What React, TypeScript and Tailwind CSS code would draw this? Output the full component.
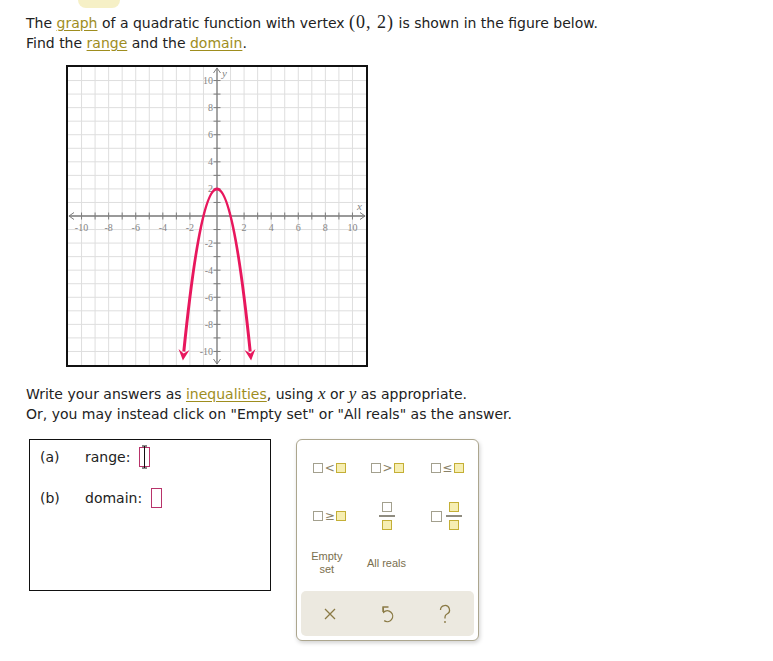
import React from "react";

const U = 298 / 22;
const O = 149;
const X = (x: number) => O + U * x;
const Y = (y: number) => O - U * y;

function Arrow({ side }: { side: 1 | -1 }) {
  const a = 2.45 * side;
  const ex = X(a);
  const ey = Y(2 - 2 * a * a);
  const vx = 1 * U * side;
  const vy = 4 * Math.abs(a) * U;
  const n = Math.hypot(vx, vy);
  const dx = vx / n;
  const dy = vy / n;
  const px = -dy;
  const py = dx;
  const tx = ex + dx * 9;
  const ty = ey + dy * 9;
  const bx = tx - dx * 11;
  const by = ty - dy * 11;
  const nx = tx - dx * 7;
  const ny = ty - dy * 7;
  const pts = [
    [tx, ty],
    [bx + px * 5.5, by + py * 5.5],
    [nx, ny],
    [bx - px * 5.5, by - py * 5.5],
  ]
    .map((p) => p.map((v) => v.toFixed(2)).join(","))
    .join(" ");
  return <polygon points={pts} fill="#e8175d" />;
}

function Graph() {
  const ints: number[] = [];
  for (let i = -10; i <= 10; i++) ints.push(i);
  const a = 2.45;
  const ey = Y(2 - 2 * a * a);
  const cy = Y(2 + 2 * a * a);
  const path = `M ${X(-a)} ${ey} Q ${X(0)} ${cy} ${X(a)} ${ey}`;
  return (
    <div className="ml-[40px] mt-[12px] h-[302px] w-[302px] border-2 border-[#111]">
      <svg width="298" height="298" viewBox="0 0 298 298" className="block">
        {ints.map((i) => (
          <g key={"g" + i}>
            <line x1={X(i)} y1={0} x2={X(i)} y2={298} stroke="#dedede" strokeWidth={1} />
            <line x1={0} y1={Y(i)} x2={298} y2={Y(i)} stroke="#dedede" strokeWidth={1} />
          </g>
        ))}
        <line x1={1} y1={Y(0)} x2={297} y2={Y(0)} stroke="#7d7d7d" strokeWidth={1.3} />
        <line x1={X(0)} y1={1} x2={X(0)} y2={297} stroke="#7d7d7d" strokeWidth={1.3} />
        <polyline points={`6,${Y(0) - 3.5} 1,${Y(0)} 6,${Y(0) + 3.5}`} fill="none" stroke="#7d7d7d" strokeWidth={1} />
        <polyline points={`292,${Y(0) - 3.5} 297,${Y(0)} 292,${Y(0) + 3.5}`} fill="none" stroke="#7d7d7d" strokeWidth={1} />
        <polyline points={`${X(0) - 3.5},6 ${X(0)},1 ${X(0) + 3.5},6`} fill="none" stroke="#7d7d7d" strokeWidth={1} />
        <polyline points={`${X(0) - 3.5},292 ${X(0)},297 ${X(0) + 3.5},292`} fill="none" stroke="#7d7d7d" strokeWidth={1} />
        {ints
          .filter((i) => i !== 0)
          .map((i) => (
            <g key={"t" + i}>
              <line x1={X(i)} y1={Y(0) - 3.5} x2={X(i)} y2={Y(0) + 3.5} stroke="#7d7d7d" strokeWidth={1} />
              <line x1={X(0) - 3.5} y1={Y(i)} x2={X(0) + 3.5} y2={Y(i)} stroke="#7d7d7d" strokeWidth={1} />
            </g>
          ))}
        <g fontFamily="'Liberation Serif', serif" fontSize="10" fill="#858585">
          {ints
            .filter((i) => i !== 0 && i % 2 === 0)
            .map((i) => (
              <text key={"xl" + i} x={X(i)} y={Y(0) + 15} textAnchor="middle">
                {i < 0 ? `-${-i}` : `${i}`}
              </text>
            ))}
          {ints
            .filter((i) => i !== 0 && i % 2 === 0)
            .map((i) => (
              <text key={"yl" + i} x={X(0) - 4} y={Y(i) + 3.5} textAnchor="end">
                {i < 0 ? `-${-i}` : `${i}`}
              </text>
            ))}
          <text x={289} y={143} fontStyle="italic" fontSize="11">x</text>
          <text x={154} y={10} fontStyle="italic" fontSize="11">y</text>
        </g>
        <path d={path} fill="none" stroke="#e8175d" strokeWidth={3} strokeLinecap="butt" />
        <Arrow side={-1} />
        <Arrow side={1} />
      </svg>
    </div>
  );
}

function Link({ children }: { children: React.ReactNode }) {
  return <span className="text-[#9e8d1e] underline underline-offset-[2px]">{children}</span>;
}

function M({ children }: { children: React.ReactNode }) {
  return <span className="font-['Liberation_Serif',serif] text-[17px] italic leading-[14px]">{children}</span>;
}

function Gray() {
  return <span className="inline-block h-[10px] w-[10px] border-[1.5px] border-[#a3a08e] bg-white" />;
}
function Yel() {
  return <span className="inline-block h-[10px] w-[10px] border-[1.5px] border-[#c4af36] bg-[#f6eeb2]" />;
}

function Ineq({ op }: { op: string }) {
  return (
    <div className="flex items-center gap-[1px]">
      <Gray />
      <span className="w-[11px] text-center font-['DejaVu_Sans',sans-serif] text-[12px] leading-[12px] text-[#8a8268]">{op}</span>
      <Yel />
    </div>
  );
}

function Frac({ topYellow }: { topYellow: boolean }) {
  return (
    <div className="flex flex-col items-center gap-[3px]">
      {topYellow ? <Yel /> : <Gray />}
      <span className="block h-[1.5px] w-[16px] bg-[#8f8c80]" />
      <Yel />
    </div>
  );
}

function Keypad() {
  return (
    <div className="w-[183px] rounded-[6px] border border-[#aca68e] bg-white px-[4px] pb-[4px] shadow-[1px_2px_4px_rgba(0,0,0,0.18)]">
      <div className="grid h-[53px] grid-cols-3 items-center pt-[2px]">
        <div className="flex justify-center"><Ineq op="<" /></div>
        <div className="flex justify-center"><Ineq op=">" /></div>
        <div className="flex justify-center pl-[4px]"><Ineq op="≤" /></div>
      </div>
      <div className="grid h-[46px] grid-cols-3 items-center">
        <div className="flex justify-center"><Ineq op="≥" /></div>
        <div className="flex justify-center"><Frac topYellow={false} /></div>
        <div className="flex items-center justify-center gap-[4px] pl-[2px]">
          <span className="inline-block h-[11px] w-[11px] border-[1.5px] border-[#a3a08e] bg-white" />
          <Frac topYellow={true} />
        </div>
      </div>
      <div className="grid h-[48px] grid-cols-3 items-center font-['Liberation_Sans',sans-serif] text-[11px] leading-[13px] text-[#7a6f4e]">
        <div className="pr-[6px] text-center">Empty<br />set</div>
        <div className="pr-[2px] text-center">All reals</div>
        <div />
      </div>
      <div className="mt-[4px] grid h-[45px] grid-cols-3 items-center rounded-[5px] bg-[#ece9e0]">
        <div className="flex justify-center">
          <svg width="14" height="14" viewBox="0 0 14 14">
            <path d="M2 2 L12 12 M12 2 L2 12" stroke="#8a7a45" strokeWidth="1.3" fill="none" />
          </svg>
        </div>
        <div className="flex justify-center">
          <svg width="16" height="18" viewBox="0 0 16 18">
            <path d="M9.5 2 H4 V7" stroke="#8a7a45" strokeWidth="1.3" fill="none" />
            <path d="M4.2 2.3 L4.6 7.2 A5.4 5.4 0 1 1 5.2 15.6" stroke="#8a7a45" strokeWidth="1.3" fill="none" />
          </svg>
        </div>
        <div className="flex justify-center">
          <svg width="14" height="20" viewBox="0 0 14 20">
            <path d="M2.5 6 A4.5 4.5 0 1 1 9 10 C7.5 10.8 7 11.6 7 13 V14.5" stroke="#8a7a45" strokeWidth="1.3" fill="none" />
            <circle cx="7" cy="18" r="0.9" fill="#8a7a45" />
          </svg>
        </div>
      </div>
    </div>
  );
}

function InputBox({ cursor }: { cursor?: boolean }) {
  return (
    <span className="relative inline-block h-[20px] w-[11px] border border-[#b8336a] bg-white">
      {cursor && (
        <svg width="9" height="24" viewBox="0 0 9 24" className="absolute left-[0px] top-[-3px]">
          <path d="M2 1 H4.5 M4.5 1 V23 M2 23 H4.5 M4.5 1 H7 M4.5 23 H7" stroke="#111" strokeWidth="1" fill="none" />
        </svg>
      )}
    </span>
  );
}

function Answers() {
  return (
    <div className="ml-[3px] h-[152px] w-[242px] border border-[#111] bg-white pl-[10px] pt-[6px]">
      <div className="flex flex-col gap-[20px]">
        <div className="flex h-[21px] items-center">
          <span className="w-[45px]">(a)</span>
          <span>range:</span>
          <span className="ml-[9px] flex"><InputBox cursor /></span>
        </div>
        <div className="flex h-[21px] items-center">
          <span className="w-[45px]">(b)</span>
          <span>domain:</span>
          <span className="ml-[9px] flex"><InputBox /></span>
        </div>
      </div>
    </div>
  );
}

export default function App() {
  return (
    <div className="relative h-[661px] w-[773px] overflow-hidden bg-white font-['DejaVu_Sans',sans-serif] text-[14px] leading-[20px] text-[#222]">
      <div className="ml-[78px] h-[8px] w-[42px] rounded-b-[8px] bg-[#f6f0c6]" />
      <div className="pl-[26px]">
        <p className="mt-[5px]">
          The <Link>graph</Link> of a quadratic function with vertex{" "}
          <span className="font-['Liberation_Serif',serif] text-[18px] leading-[14px] tracking-[1px]">(0, 2)</span> is shown in the figure below.
          <br />
          Find the <Link>range</Link> and the <Link>domain</Link>.
        </p>
        <Graph />
        <p className="mt-[17px]">
          Write your answers as <Link>inequalities</Link>, using <M>x</M> or <M>y</M> as appropriate.
          <br />
          Or, you may instead click on "Empty set" or "All reals" as the answer.
        </p>
        <div className="mt-[15px] flex items-start gap-[25px]">
          <Answers />
          <Keypad />
        </div>
      </div>
    </div>
  );
}
